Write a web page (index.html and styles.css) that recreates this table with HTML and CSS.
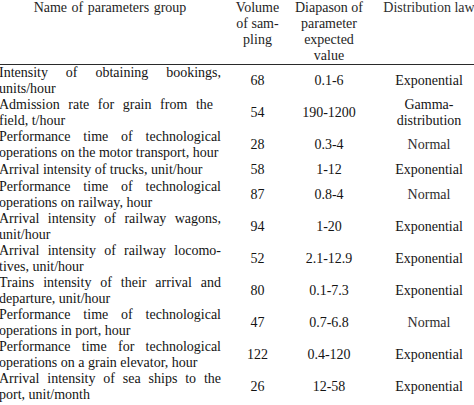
FILE: index.html
```html
<!DOCTYPE html>
<html>
<head>
<meta charset="utf-8">
<link rel="stylesheet" href="styles.css">
</head>
<body>
<table class="params">
  <colgroup>
    <col class="c-name">
    <col class="c-vol">
    <col class="c-range">
    <col class="c-law">
  </colgroup>
  <thead>
    <tr>
      <th class="h-name">Name of parameters group</th>
      <th>Volume<br>of sam-<br>pling</th>
      <th>Diapason of<br>parameter<br>expected<br>value</th>
      <th class="h-law">Distribution law</th>
    </tr>
  </thead>
  <tbody>
    <tr class="two">
      <td class="name">Intensity of obtaining bookings, units/hour</td>
      <td>68</td><td>0.1-6</td><td>Exponential</td>
    </tr>
    <tr class="two">
      <td class="name narrow">Admission rate for grain from the field, t/hour</td>
      <td>54</td><td>190-1200</td><td>Gamma-<br>distribution</td>
    </tr>
    <tr class="two">
      <td class="name">Performance time of technological operations on the motor transport, hour</td>
      <td>28</td><td>0.3-4</td><td class="normal">Normal</td>
    </tr>
    <tr class="one">
      <td class="name">Arrival intensity of trucks, unit/hour</td>
      <td>58</td><td>1-12</td><td>Exponential</td>
    </tr>
    <tr class="two">
      <td class="name">Performance time of technological operations on railway, hour</td>
      <td>87</td><td>0.8-4</td><td class="normal">Normal</td>
    </tr>
    <tr class="two">
      <td class="name">Arrival intensity of railway wagons, unit/hour</td>
      <td>94</td><td>1-20</td><td>Exponential</td>
    </tr>
    <tr class="two">
      <td class="name">Arrival intensity of railway locomo-tives, unit/hour</td>
      <td>52</td><td>2.1-12.9</td><td>Exponential</td>
    </tr>
    <tr class="two">
      <td class="name">Trains intensity of their arrival and departure, unit/hour</td>
      <td>80</td><td>0.1-7.3</td><td>Exponential</td>
    </tr>
    <tr class="two">
      <td class="name">Performance time of technological operations in port, hour</td>
      <td>47</td><td>0.7-6.8</td><td class="normal">Normal</td>
    </tr>
    <tr class="two">
      <td class="name">Performance time for technological operations on a grain elevator, hour</td>
      <td>122</td><td>0.4-120</td><td>Exponential</td>
    </tr>
    <tr class="two">
      <td class="name">Arrival intensity of sea ships to the port, unit/month</td>
      <td>26</td><td>12-58</td><td>Exponential</td>
    </tr>
  </tbody>
</table>
</body>
</html>
```

FILE: styles.css
```css
html, body {
  margin: 0;
  padding: 0;
  overflow: hidden;
  background: #ffffff;
}

body {
  width: 474px;
  height: 405px;
  font-family: "Liberation Serif", "Times New Roman", serif;
  font-size: 14px;
  line-height: 16px;
  color: #141414;
}

.params {
  border-collapse: collapse;
  table-layout: fixed;
  width: 484px;
  margin-left: -1px;
}

.c-name { width: 233px; }
.c-vol { width: 51px; }
.c-range { width: 92px; }
.c-law { width: 108px; }

.params th,
.params td {
  padding: 0;
  text-align: center;
  vertical-align: middle;
  font-weight: normal;
}

.params th {
  vertical-align: top;
  height: 64px;
  border-bottom: 1.5px solid #2a2a2a;
  color: #1e1e1e;
}

.params th.h-name {
  padding-right: 11px;
  word-spacing: 1px;
}

.params th.h-law {
  color: #2e2e2e;
  white-space: nowrap;
}

.params td.name {
  text-align: justify;
  padding-right: 11px;
}

.params td.name.narrow {
  padding-right: 19px;
}

.params tr.two td { height: 32px; }
.params tr.one td { height: 18px; }

.params td.normal { color: #2e2e2e; }
```
